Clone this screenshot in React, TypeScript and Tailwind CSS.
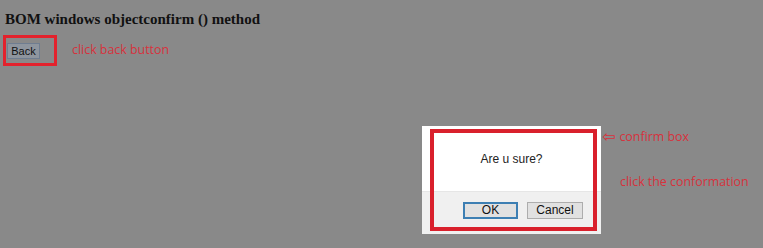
const note = "font-['Open_Sans',sans-serif] text-[12.4px] text-[#d7323d]";

const App = () => {
  return (
    <div className="relative h-[248px] w-[763px] overflow-hidden bg-[#898989]">
      <h1 className="pl-[5px] pt-[10px] font-['Liberation_Serif',serif] text-[15px] font-bold leading-[18px] text-[#111]">
        BOM windows objectconfirm () method
      </h1>

      <div className="mt-[7px] flex items-center">
        <div className="ml-[3px] flex h-[31px] w-[54px] items-center border-[3px] border-[#e3222c] pl-[1px]">
          <button className="h-[16px] w-[33px] border border-[#6f7d90] bg-[#8e959e] font-['Liberation_Sans',sans-serif] text-[11px] leading-[14px] text-[#111]">
            Back
          </button>
        </div>
        <span className={`ml-[15px] ${note}`}>click back button</span>
      </div>

      <div className="mt-[60px] flex">
        <div className="relative ml-[422px] flex h-[108px] w-[179px] flex-col bg-white">
          <div className="flex h-[65px] items-center justify-center pt-[1px] font-['Liberation_Sans',sans-serif] text-[12px] text-[#222]">
            Are u sure?
          </div>
          <div className="flex flex-1 items-start justify-end gap-[9px] border-t border-[#e6e6e6] bg-[#f0f0f0] pr-[18px] pt-[10px]">
            <button className="h-[17px] w-[55px] border-2 border-[#3d7fb3] bg-[#e1e1e1] font-['Liberation_Sans',sans-serif] text-[12px] leading-[13px] text-[#111]">
              OK
            </button>
            <button className="h-[17px] w-[56px] border border-[#adadad] bg-[#e1e1e1] font-['Liberation_Sans',sans-serif] text-[12px] leading-[15px] text-[#111]">
              Cancel
            </button>
          </div>
          <div className="absolute bottom-[3px] left-[8px] right-[4px] top-[3px] border-4 border-[#d9202c]" />
        </div>

        <div className="ml-[1px] flex flex-col pt-[2px]">
          <div className="flex items-center gap-[4px]">
            <span className="font-['DejaVu_Sans',sans-serif] text-[16px] leading-[18px] text-[#d7323d]">⇦</span>
            <span className={note}>confirm box</span>
          </div>
          <span className={`ml-[18px] mt-[26px] ${note}`}>click the conformation</span>
        </div>
      </div>
    </div>
  );
};

export default App;
